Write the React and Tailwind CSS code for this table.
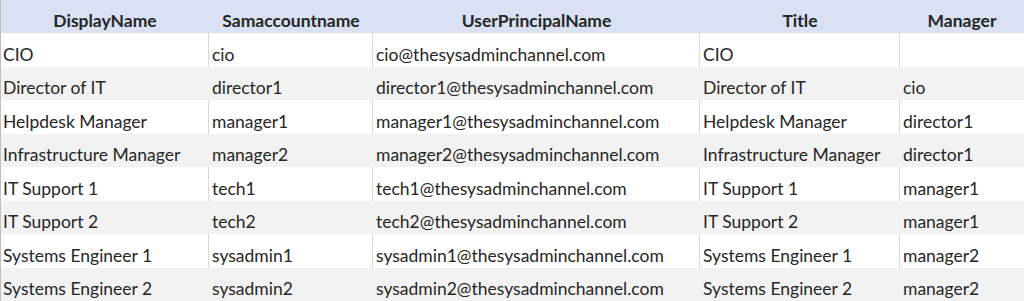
import React from "react";

const rows = [
  ["CIO", "cio", "cio@thesysadminchannel.com", "CIO", ""],
  ["Director of IT", "director1", "director1@thesysadminchannel.com", "Director of IT", "cio"],
  ["Helpdesk Manager", "manager1", "manager1@thesysadminchannel.com", "Helpdesk Manager", "director1"],
  ["Infrastructure Manager", "manager2", "manager2@thesysadminchannel.com", "Infrastructure Manager", "director1"],
  ["IT Support 1", "tech1", "tech1@thesysadminchannel.com", "IT Support 1", "manager1"],
  ["IT Support 2", "tech2", "tech2@thesysadminchannel.com", "IT Support 2", "manager1"],
  ["Systems Engineer 1", "sysadmin1", "sysadmin1@thesysadminchannel.com", "Systems Engineer 1", "manager2"],
  ["Systems Engineer 2", "sysadmin2", "sysadmin2@thesysadminchannel.com", "Systems Engineer 2", "manager2"],
];

const headers = ["DisplayName", "Samaccountname", "UserPrincipalName", "Title", "Manager"];
const heights = ["h-[34px]", "h-[33px]"];

export default function App() {
  return (
    <div
      className="w-[1024px] h-[301px] overflow-hidden bg-white border-l border-[#bfbfbf] text-[#262626]"
      style={{ fontFamily: "Lato, 'Liberation Sans', sans-serif" }}
    >
      <div className="grid grid-cols-[208px_164px_327px_200px_124px] h-[33px] bg-[#d9e1f2] font-bold text-[17.5px]">
        {headers.map((h) => (
          <div key={h} className="flex items-end justify-center pb-[4px] leading-none">
            {h}
          </div>
        ))}
      </div>
      {rows.map((r, i) => (
        <div
          key={i}
          className={`grid grid-cols-[208px_164px_327px_200px_124px] text-[17.5px] ${heights[i % 2]} ${
            i % 2 === 0 ? "bg-white" : "bg-[#f2f2f2]"
          }`}
        >
          {r.map((c, j) => (
            <div
              key={j}
              className={`flex items-end pb-[4px] leading-none whitespace-nowrap ${
                j < 4 ? (i % 2 === 0 ? "border-r border-[#d9d9d9]" : "border-r border-[#f2f2f2]") : ""
              } ${j > 0 ? "pl-[3px]" : "pl-[2px]"}`}
            >
              {c}
            </div>
          ))}
        </div>
      ))}
    </div>
  );
}
